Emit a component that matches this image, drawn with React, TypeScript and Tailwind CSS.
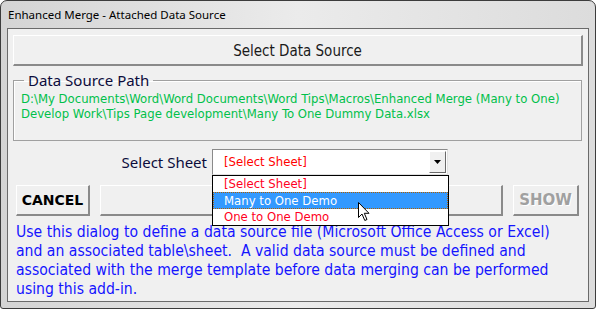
import React from "react";

const tahoma = { fontFamily: "'DejaVu Sans Condensed', 'DejaVu Sans', sans-serif" };
const tahomaBold = { fontFamily: "'DejaVu Sans', sans-serif" };
const segoe = { fontFamily: "'Noto Sans', 'Open Sans', sans-serif" };

const sheets = ["[Select Sheet]", "Many to One Demo", "One to One Demo"];

const App = () => {
  return (
    <div className="w-[596px] h-[309px] bg-white">
      <div className="w-[596px] h-[309px] flex flex-col rounded-t-[7px] rounded-b-[3px] border border-[#3c3c3c] bg-gradient-to-r from-[#d4d4d4] via-[#ebebeb] to-[#dcdcdc] px-[6px] pb-[6px]">
        <div className="h-[27px] flex items-center pl-[1px] text-[11.5px] text-black" style={segoe}>
          Enhanced Merge - Attached Data Source
        </div>
        <div className="flex-1 border border-[#6a6a6a] bg-[#f0f0f0] flex flex-col px-[5px] pt-[6px]">
          <button
            className="h-[31px] w-full bg-[#f0f0f0] border-t border-l border-white border-r-2 border-b-2 border-r-[#8a8a8a] border-b-[#8a8a8a] text-[15px] text-[#1a1a1a] pt-[2px]"
            style={tahoma}
          >
            Select Data Source
          </button>

          <fieldset className="mt-[6px] mr-[1px] h-[69px] border border-[#a0a0a0] shadow-[inset_1px_1px_0_#ffffff] px-[7px]">
            <legend className="ml-[3px] px-[4px] text-[15px] leading-[17px] text-[#0c0c3c]" style={segoe}>
              Data Source Path
            </legend>
            <div className="text-[13px] leading-[15px] text-[#00c04a] whitespace-pre pt-[2px]" style={tahoma}>
              {"D:\\My Documents\\Word\\Word Documents\\Word Tips\\Macros\\Enhanced Merge (Many to One)\nDevelop Work\\Tips Page development\\Many To One Dummy Data.xlsx"}
            </div>
          </fieldset>

          <div className="mt-[8px] flex items-center">
            <div className="w-[199px] text-right pr-[5px] text-[15px] text-[#0c0c3c]" style={segoe}>
              Select Sheet
            </div>
            <div className="relative">
              <div className="w-[236px] h-[26px] flex border border-t-[#8a8a8a] border-l-[#8a8a8a] border-r-[#e0e0e0] border-b-[#e0e0e0] bg-white">
                <div className="flex-1 pl-[11px] flex items-center text-[13px] text-[#ff0000]" style={tahoma}>
                  [Select Sheet]
                </div>
                <div className="w-[17px] my-[1px] mr-[1px] bg-[#f0f0f0] border-t border-l border-white border-r border-b border-r-[#6a6a6a] border-b-[#6a6a6a] flex items-center justify-center">
                  <svg width="7" height="4" viewBox="0 0 7 4">
                    <path d="M0 0h7L3.5 4z" fill="#000" />
                  </svg>
                </div>
              </div>
              <div className="absolute left-0 top-full z-10 w-[237px] border border-black bg-white" style={tahoma}>
                {sheets.map((s, i) => (
                  <div
                    key={s}
                    className={
                      i === 1
                        ? "h-[17px] pl-[10px] flex items-center text-[13px] bg-[#3399ff] text-white border border-dotted border-[#b06000]"
                        : "h-[16px] pl-[11px] flex items-center text-[13px] text-[#ff0022]"
                    }
                  >
                    {s}
                  </div>
                ))}
                <svg className="absolute left-[145px] top-[26px]" width="13" height="20" viewBox="0 0 13 20">
                  <path
                    d="M0.5 0.5 L0.5 15.5 L4 12 L6.8 18.5 L9 17.5 L6.3 11.3 L11 11.3 Z"
                    fill="#fff"
                    stroke="#000"
                    strokeWidth="1"
                    strokeLinejoin="round"
                  />
                </svg>
              </div>
            </div>
          </div>

          <div className="mt-[10px] flex gap-[10px] pl-[3px] pr-[4px]">
            <button
              className="w-[74px] h-[31px] bg-[#f0f0f0] border-t border-l border-white border-r-2 border-b-2 border-r-[#8a8a8a] border-b-[#8a8a8a] text-[14px] font-bold text-black"
              style={tahomaBold}
            >
              CANCEL
            </button>
            <button className="flex-1 h-[31px] bg-[#f0f0f0] border-t border-l border-white border-r-2 border-b-2 border-r-[#8a8a8a] border-b-[#8a8a8a]" />
            <button
              className="w-[66px] h-[31px] bg-[#f0f0f0] border-t border-l border-white border-r-2 border-b-2 border-r-[#8a8a8a] border-b-[#8a8a8a] text-[15px] font-bold text-[#a0a0a0] [text-shadow:1px_1px_0_#ffffff]"
              style={tahomaBold}
            >
              SHOW
            </button>
          </div>

          <div className="mt-[7px] pl-[3px] text-[15.6px] leading-[19px] text-[#1414ff] whitespace-pre" style={tahoma}>
            {"Use this dialog to define a data source file (Microsoft Office Access or Excel)\nand an associated table\\sheet.  A valid data source must be defined and\nassociated with the merge template before data merging can be performed\nusing this add-in."}
          </div>
        </div>
      </div>
    </div>
  );
};

export default App;
